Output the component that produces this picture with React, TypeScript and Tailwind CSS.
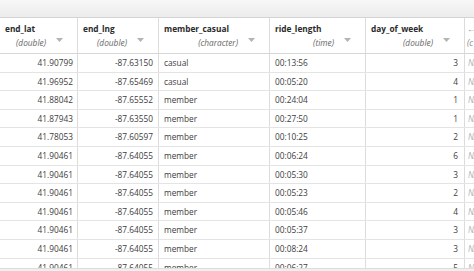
const rows = [
  ['41.90799', '-87.63150', 'casual', '00:13:56', '3'],
  ['41.96952', '-87.65469', 'casual', '00:05:20', '4'],
  ['41.88042', '-87.65552', 'member', '00:24:04', '1'],
  ['41.87943', '-87.63550', 'member', '00:27:50', '1'],
  ['41.78053', '-87.60597', 'member', '00:10:25', '2'],
  ['41.90461', '-87.64055', 'member', '00:06:24', '6'],
  ['41.90461', '-87.64055', 'member', '00:05:30', '3'],
  ['41.90461', '-87.64055', 'member', '00:05:23', '2'],
  ['41.90461', '-87.64055', 'member', '00:05:46', '4'],
  ['41.90461', '-87.64055', 'member', '00:05:37', '3'],
  ['41.90461', '-87.64055', 'member', '00:08:24', '3'],
  ['41.90461', '-87.64055', 'member', '00:06:27', '5'],
]

const columns = [
  { name: 'end_lat', type: '(double)' },
  { name: 'end_lng', type: '(double)' },
  { name: 'member_casual', type: '(character)' },
  { name: 'ride_length', type: '(time)' },
  { name: 'day_of_week', type: '(double)' },
]

const grid = 'grid grid-cols-[78px_81px_111px_96px_99px_60px]'

function SortArrow() {
  return (
    <svg width="7" height="4" viewBox="0 0 7 4" className="absolute right-[14px] top-[20px]" aria-hidden="true">
      <path d="M0 0 L7 0 L3.5 4 Z" fill="#b4b4b4" />
    </svg>
  )
}

export default function App() {
  return (
    <div className="w-[474px] h-[271px] overflow-hidden bg-white text-[8.3px] text-[#3c3c3c] font-['Open_Sans',sans-serif]">
      {/* toolbar strip */}
      <div className="h-[18px] bg-gradient-to-b from-[#f7f7f7] to-[#ececec] border-b border-[#d4d4d4]" />

      {/* header */}
      <div className={`${grid} h-[36px] border-b border-[#d6d6d6]`}>
        {columns.map((c) => (
          <div key={c.name} className="relative border-r border-[#dcdcdc] pl-[5px]">
            <div className="pt-[5px] font-bold text-[#2a2a2a] leading-[12px]">{c.name}</div>
            <div className="pr-[31px] pt-[2px] text-right italic text-[#666] leading-[12px]">{c.type}</div>
            <SortArrow />
          </div>
        ))}
        <div className="pl-[2px] text-[#888] whitespace-nowrap overflow-hidden">
          <div className="pt-[5px] leading-[12px]">← end</div>
          <div className="pt-[2px] leading-[12px] italic">(c</div>
        </div>
      </div>

      {/* body */}
      <div className="h-[214px] overflow-hidden">
        {rows.map((r, i) => (
          <div key={i} className={`${grid} h-[18.6px] border-b border-[#e4e4e4] leading-[17.6px]`}>
            <div className="border-r border-[#dcdcdc] pr-[4px] text-right">{r[0]}</div>
            <div className="border-r border-[#dcdcdc] pr-[5px] text-right">{r[1]}</div>
            <div className="border-r border-[#dcdcdc] pl-[5px]">{r[2]}</div>
            <div className="border-r border-[#dcdcdc] pl-[5px]">{r[3]}</div>
            <div className="border-r border-[#dcdcdc] pr-[6px] text-right">{r[4]}</div>
            <div className="pl-[3px] italic text-[#b0b0b0] whitespace-nowrap overflow-hidden">NA</div>
          </div>
        ))}
      </div>

      {/* horizontal scrollbar edge */}
      <div className="h-[3px] bg-[#efefef] border-t border-[#dedede]" />
    </div>
  )
}
